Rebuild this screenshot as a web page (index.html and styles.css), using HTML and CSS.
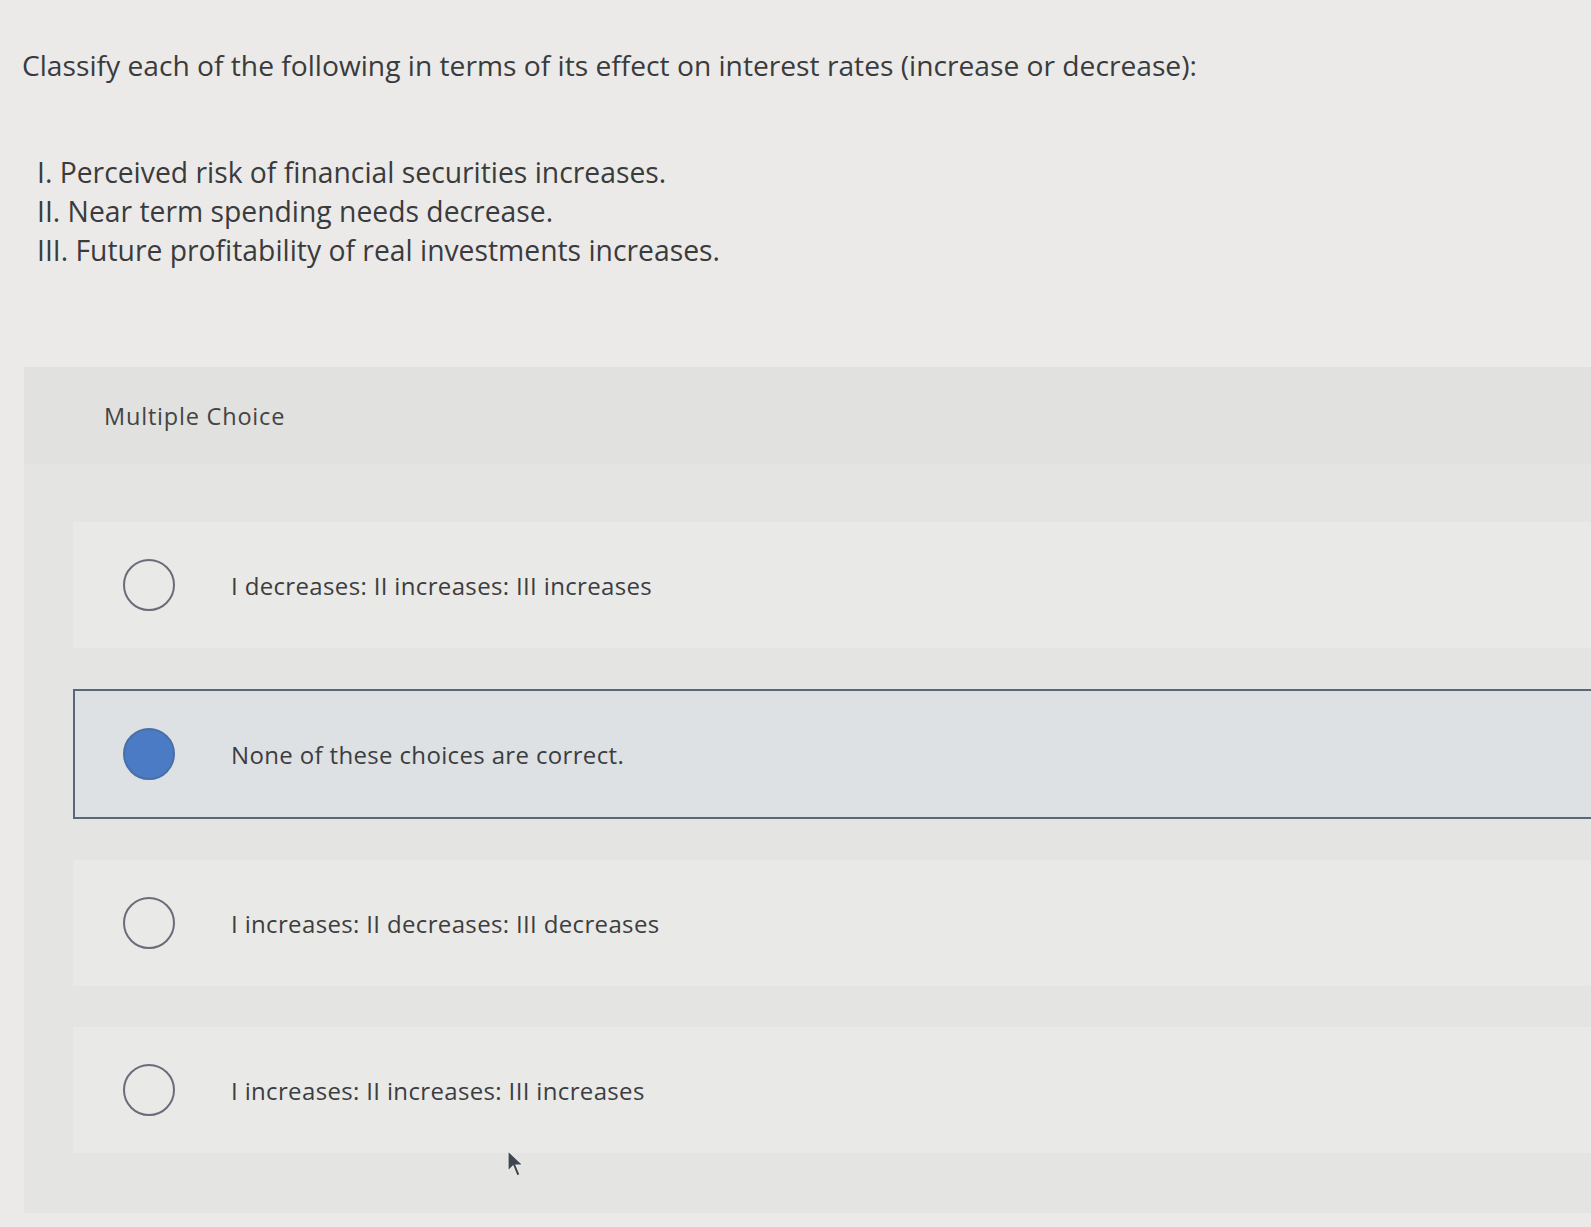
FILE: index.html
```html
<!DOCTYPE html>
<html lang="en">
  <head>
    <meta charset="utf-8">
    <title>Multiple Choice</title>
    <link rel="stylesheet" href="styles.css">
  </head>
  <body>
    <div class="question">
      <p class="prompt">Classify each of the following in terms of its effect on interest rates (increase or decrease):</p>
      <div class="statements">
        <div>I. Perceived risk of financial securities increases.</div>
        <div>II. Near term spending needs decrease.</div>
        <div>III. Future profitability of real investments increases.</div>
      </div>
    </div>

    <div class="panel">
      <div class="panel-head">Multiple Choice</div>
      <div class="panel-body">
        <div class="option">
          <span class="radio"></span>
          <span class="label">I decreases: II increases: III increases</span>
        </div>
        <div class="option selected">
          <span class="radio"></span>
          <span class="label">None of these choices are correct.</span>
        </div>
        <div class="option">
          <span class="radio"></span>
          <span class="label">I increases: II decreases: III decreases</span>
        </div>
        <div class="option">
          <span class="radio"></span>
          <span class="label">I increases: II increases: III increases</span>
        </div>
      </div>
      <svg class="cursor" width="22" height="30" viewBox="0 0 22 30">
        <path d="M2 2 L2 22 L7 17 L11 27 L14 25.5 L10 16 L17 16 Z" fill="#3f4650" stroke="#e9e9e7" stroke-width="1.2"/>
      </svg>
    </div>
  </body>
</html>
```

FILE: styles.css
```css
body{
  margin:0;
  background-color:#ebeae8;
  font-family:"Open Sans", "Lato", sans-serif;
  color:#3a3b3d;
}
.question{
  padding:46px 0 0 22px;
}
.prompt{
  margin:0;
  font-size:28.2px;
  line-height:38px;
}
.statements{
  margin-top:69px;
  padding-left:15px;
  font-size:28.3px;
  line-height:39px;
}
.panel{
  position:relative;
  margin:97px 0 0 24px;
  background-color:#e4e4e2;
}
.panel-head{
  height:97px;
  padding-left:80px;
  display:flex;
  align-items:center;
  font-size:23.5px;
  letter-spacing:0.8px;
  background-color:#e1e1df;
  color:#444;
}
.panel-body{
  padding:58px 0 60px 49px;
  display:flex;
  flex-direction:column;
  gap:41px;
}
.option{
  height:126px;
  display:flex;
  align-items:center;
  padding-left:50px;
  background-color:#e9e9e7;
  box-sizing:border-box;
}
.option.selected{
  background-color:#dde1e4;
  border:2px solid #5a677a;
  border-right:none;
  padding-left:48px;
  height:130px;
}
.radio{
  width:48px;
  height:48px;
  border:2px solid #6b6c7a;
  border-radius:50%;
  flex:none;
}
.selected .radio{
  background-color:#4a7bc4;
  border-color:#4a6fa8;
}
.label{
  margin-left:56px;
  font-size:24px;
  letter-spacing:0.35px;
  color:#3c3d40;
}
.cursor{
  position:absolute;
  left:482px;
  top:782px;
}
```
